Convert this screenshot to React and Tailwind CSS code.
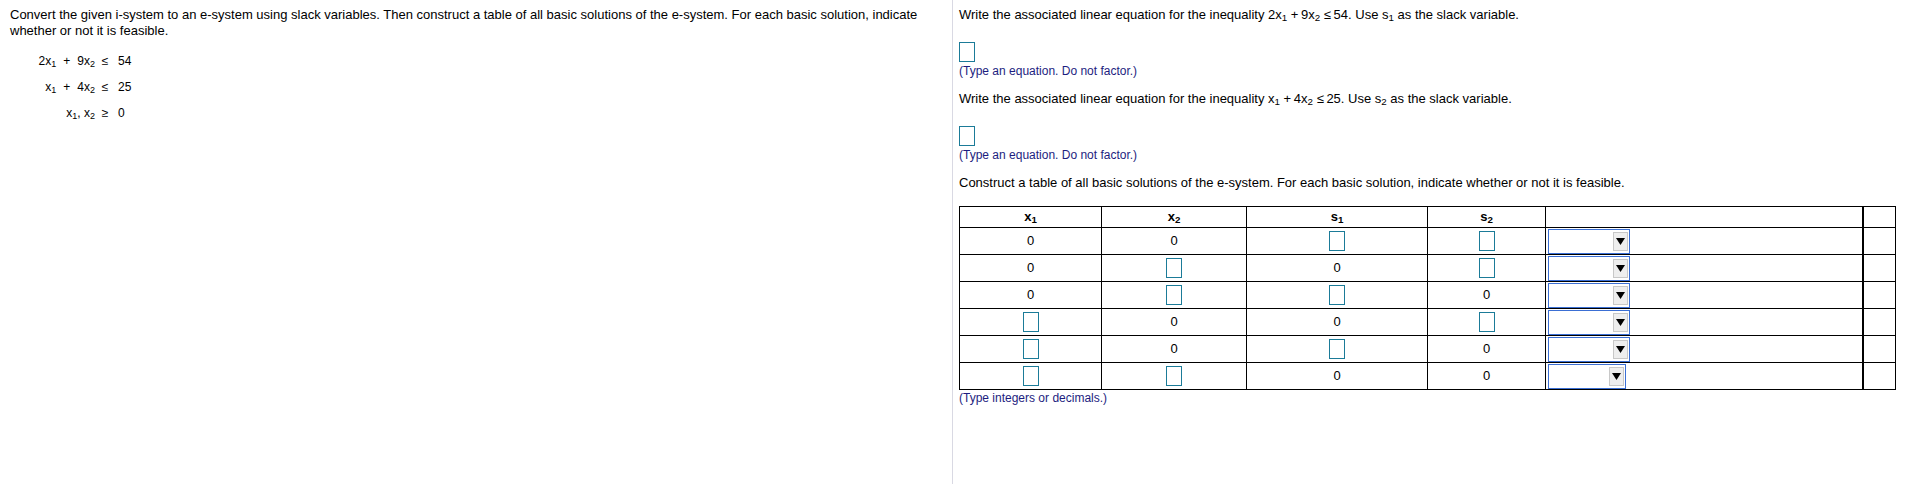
import React from "react";

const rows = [
  ["0", "0", "box", "box"],
  ["0", "box", "0", "box"],
  ["0", "box", "box", "0"],
  ["box", "0", "0", "box"],
  ["box", "0", "box", "0"],
  ["box", "box", "0", "0"],
];

function Box() {
  return (
    <span className="inline-block w-[16px] h-[20px] border border-[#1b7b98] bg-white align-middle"></span>
  );
}

function Dropdown({ narrow }) {
  return (
    <div
      className={`flex items-center justify-end h-[25px] border border-[#3b6fd4] bg-white pr-[1px] ${
        narrow ? "w-[78px]" : "w-[82px]"
      }`}
    >
      <div className="w-[15px] h-[19px] bg-[#eeeeee] border border-[#c8c8c8] flex items-center justify-center">
        <svg width="9" height="7" viewBox="0 0 9 7">
          <path d="M0 0h9L4.5 7z" fill="#000" />
        </svg>
      </div>
    </div>
  );
}

function Hint({ children, className = "" }) {
  return <p className={`text-[#1d1d80] text-[12px] leading-[16px] ${className}`}>{children}</p>;
}

function App() {
  return (
    <div className="flex h-screen bg-white text-black text-[12px] font-['Liberation_Sans',Arial,sans-serif]">
      {/* left: the problem */}
      <div className="w-[953px] shrink-0 border-r border-[#d9d9e3] pl-[10px] pr-[10px] pt-[7px]">
        <p className="text-[13px] leading-[16px]">
          Convert the given i-system to an e-system using slack variables. Then construct a table of all basic
          solutions of the e-system. For each basic solution, indicate whether or not it is feasible.
        </p>

        <div className="mt-[9px] ml-[27px] grid grid-cols-[58px_20px_auto] leading-[26px]">
          <div className="text-right">
            2x<sub>1</sub>
            <span className="mx-[7px]">+</span>
            9x<sub>2</sub>
          </div>
          <div className="text-center">≤</div>
          <div className="pl-[3px]">54</div>

          <div className="text-right">
            x<sub>1</sub>
            <span className="mx-[7px]">+</span>
            4x<sub>2</sub>
          </div>
          <div className="text-center">≤</div>
          <div className="pl-[3px]">25</div>

          <div className="text-right">
            x<sub>1</sub>, x<sub>2</sub>
          </div>
          <div className="text-center">≥</div>
          <div className="pl-[3px]">0</div>
        </div>
      </div>

      {/* right: the answers */}
      <div className="flex-1 pl-[6px] pt-[7px]">
        <p className="text-[13px] leading-[16px]">
          Write the associated linear equation for the inequality 2x<sub>1</sub> +{"\u2009"}9x<sub>2</sub>{" "}
          ≤{"\u2009"}54. Use s<sub>1</sub> as the slack variable.
        </p>
        <div className="mt-[19px] h-[20px] flex">
          <Box />
        </div>
        <Hint className="mt-[1px]">(Type an equation. Do not factor.)</Hint>

        <p className="text-[13px] leading-[16px] mt-[12px]">
          Write the associated linear equation for the inequality x<sub>1</sub> +{"\u2009"}4x<sub>2</sub>{" "}
          ≤{"\u2009"}25. Use s<sub>2</sub> as the slack variable.
        </p>
        <div className="mt-[19px] h-[20px] flex">
          <Box />
        </div>
        <Hint className="mt-[1px]">(Type an equation. Do not factor.)</Hint>

        <p className="text-[13px] leading-[16px] mt-[12px]">
          Construct a table of all basic solutions of the e-system. For each basic solution, indicate whether or
          not it is feasible.
        </p>

        <table className="mt-[15px] table-fixed border-collapse w-[936px] text-[13px]">
          <colgroup>
            <col className="w-[142px]" />
            <col className="w-[145px]" />
            <col className="w-[181px]" />
            <col className="w-[118px]" />
            <col className="w-[317px]" />
            <col className="w-[33px]" />
          </colgroup>
          <thead>
            <tr className="h-[21px]">
              <th className="border border-black p-0 font-bold leading-[16px]">
                x<sub>1</sub>
              </th>
              <th className="border border-black p-0 font-bold leading-[16px]">
                x<sub>2</sub>
              </th>
              <th className="border border-black p-0 font-bold leading-[16px]">
                s<sub>1</sub>
              </th>
              <th className="border border-black p-0 font-bold leading-[16px]">
                s<sub>2</sub>
              </th>
              <th className="border border-black border-r-2 p-0"></th>
              <th className="border border-black p-0"></th>
            </tr>
          </thead>
          <tbody>
            {rows.map((r, i) => (
              <tr key={i} className="h-[27px]">
                {r.map((v, j) => (
                  <td key={j} className="border border-black p-0 text-center align-middle leading-[16px]">
                    {v === "box" ? <Box /> : v}
                  </td>
                ))}
                <td className="border border-black border-r-2 p-0 pl-[2px] align-middle">
                  <Dropdown narrow={i === 5} />
                </td>
                <td className="border border-black p-0"></td>
              </tr>
            ))}
          </tbody>
        </table>
        <Hint>(Type integers or decimals.)</Hint>
      </div>
    </div>
  );
}

export default App;
